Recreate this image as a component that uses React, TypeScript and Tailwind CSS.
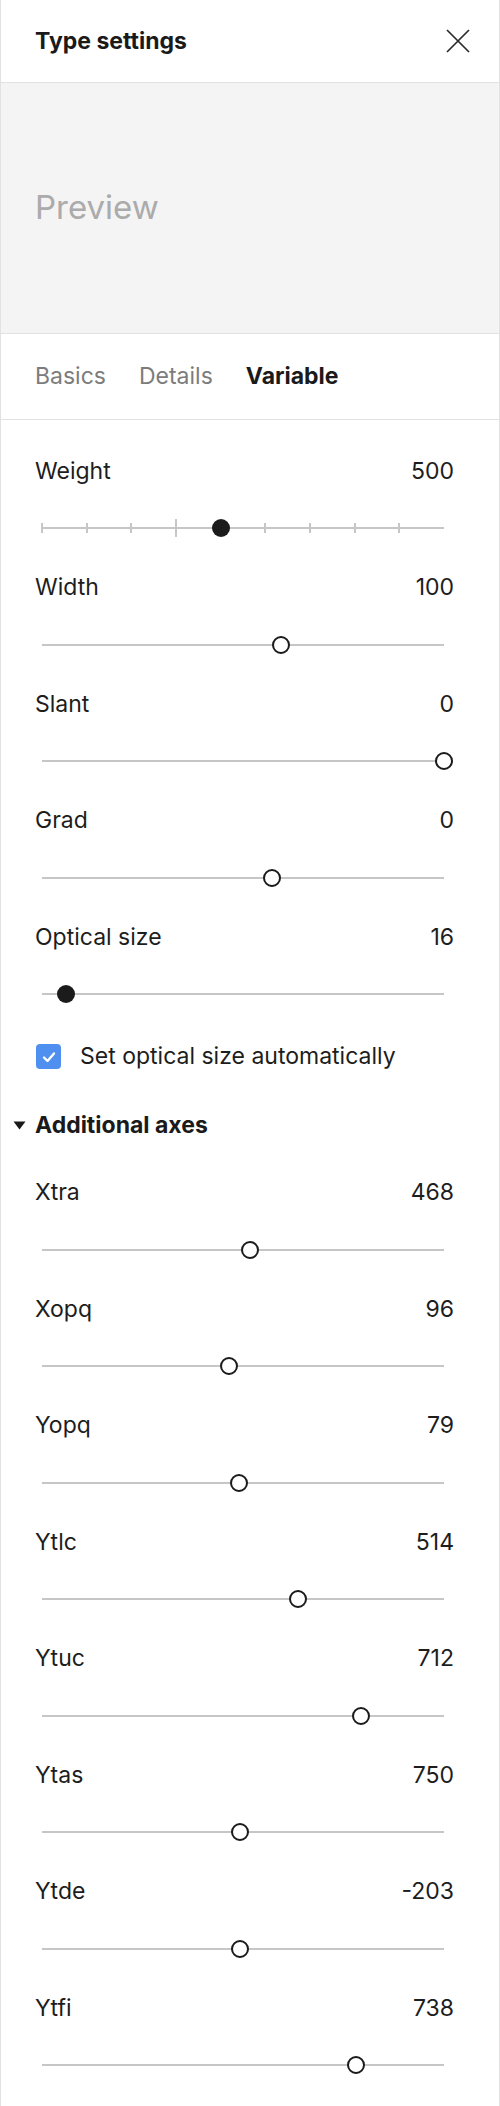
import React from "react";

type Axis = {
  label: string;
  value: number;
  min: number;
  max: number;
  filled?: boolean;
  ticks?: boolean;
};

const mainAxes: Axis[] = [
  { label: "Weight", value: 500, min: 100, max: 1000, filled: true, ticks: true },
  { label: "Width", value: 100, min: 25, max: 151 },
  { label: "Slant", value: 0, min: -10, max: 0 },
  { label: "Grad", value: 0, min: -200, max: 150 },
  { label: "Optical size", value: 16, min: 8, max: 144, filled: true },
];

const extraAxes: Axis[] = [
  { label: "Xtra", value: 468, min: 323, max: 603 },
  { label: "Xopq", value: 96, min: 27, max: 175 },
  { label: "Yopq", value: 79, min: 25, max: 135 },
  { label: "Ytlc", value: 514, min: 416, max: 570 },
  { label: "Ytuc", value: 712, min: 528, max: 760 },
  { label: "Ytas", value: 750, min: 649, max: 854 },
  { label: "Ytde", value: -203, min: -305, max: -98 },
  { label: "Ytfi", value: 738, min: 560, max: 788 },
];

function Slider({ axis }: { axis: Axis }) {
  const frac = (axis.value - axis.min) / (axis.max - axis.min);
  const tickValues = [100, 200, 300, 400, 500, 600, 700, 800, 900];
  return (
    <div className="relative ml-[7px] h-[24px] w-[402px]">
      <div className="absolute left-0 right-0 top-[11px] h-[2px] bg-[#c6c6c6]" />
      {axis.ticks &&
        tickValues.map((t) => {
          const f = (t - axis.min) / (axis.max - axis.min);
          const tall = t === 400;
          return (
            <div
              key={t}
              className={
                tall
                  ? "absolute top-[3px] h-[18px] w-[2px] -translate-x-1/2 bg-[#c6c6c6]"
                  : "absolute top-[7px] h-[10px] w-[2px] -translate-x-1/2 bg-[#c6c6c6]"
              }
              style={{ left: `${f * 100}%` }}
            />
          );
        })}
      <div
        className={
          axis.filled
            ? "absolute top-[3px] h-[18px] w-[18px] -translate-x-1/2 rounded-full bg-[#1b1b1b]"
            : "absolute top-[3px] h-[18px] w-[18px] -translate-x-1/2 rounded-full border-2 border-[#1b1b1b] bg-white"
        }
        style={{ left: `${frac * 100}%` }}
      />
    </div>
  );
}

function AxisRow({ axis }: { axis: Axis }) {
  return (
    <div className="h-[116.5px]">
      <div className="flex h-[24px] items-center justify-between leading-[24px]">
        <span>{axis.label}</span>
        <span>{axis.value}</span>
      </div>
      <div className="mt-[33.5px]">
        <Slider axis={axis} />
      </div>
    </div>
  );
}

export default function App() {
  return (
    <div
      className="w-[500px] border-x border-[#e2e2e2] bg-white text-[23px] text-[#1d1d1d]"
      style={{ fontFamily: "Inter, 'Noto Sans', sans-serif" }}
    >
      <div className="flex h-[83px] items-center justify-between border-b border-[#e2e2e2] pl-[34px] pr-[29px]">
        <span className="text-[23px] font-bold text-[#1a1a1a]">Type settings</span>
        <svg width="24" height="24" viewBox="0 0 24 24" fill="none">
          <path d="M1 1L23 23M23 1L1 23" stroke="#2b2b2b" strokeWidth="1.7" />
        </svg>
      </div>
      <div className="flex h-[251px] items-center border-b border-[#e2e2e2] bg-[#f4f4f4] pl-[34px]">
        <span className="text-[33px] text-[#ababab]">Preview</span>
      </div>
      <div className="flex h-[86px] items-center gap-[33px] border-b border-[#e2e2e2] pl-[34px]">
        <span className="text-[#7c7c7c]">Basics</span>
        <span className="text-[#7c7c7c]">Details</span>
        <span className="font-bold text-[#1a1a1a]">Variable</span>
      </div>
      <div className="pl-[34px] pr-[45px] pt-[38.5px]">
        {mainAxes.map((a) => (
          <AxisRow key={a.label} axis={a} />
        ))}
        <div className="mt-[3px] flex h-[25px] items-center gap-[19px]">
          <div className="ml-[1px] flex h-[25px] w-[25px] items-center justify-center rounded-[4px] bg-[#4f8ff0]">
            <svg width="16" height="16" viewBox="0 0 16 16" fill="none">
              <path d="M3 8.5L6.5 12L13 4.5" stroke="white" strokeWidth="2.4" strokeLinecap="round" strokeLinejoin="round" />
            </svg>
          </div>
          <span>Set optical size automatically</span>
        </div>
      </div>
      <div className="mt-[44px] flex h-[24px] items-center pl-[12px]">
        <svg width="13" height="9" viewBox="0 0 13 9" className="mr-[9px]">
          <path d="M0.5 0.5H12.5L6.5 8.5Z" fill="#1a1a1a" />
        </svg>
        <span className="font-bold text-[#1a1a1a]">Additional axes</span>
      </div>
      <div className="pl-[34px] pr-[45px] pt-[43.3px]">
        {extraAxes.map((a) => (
          <AxisRow key={a.label} axis={a} />
        ))}
      </div>
    </div>
  );
}
